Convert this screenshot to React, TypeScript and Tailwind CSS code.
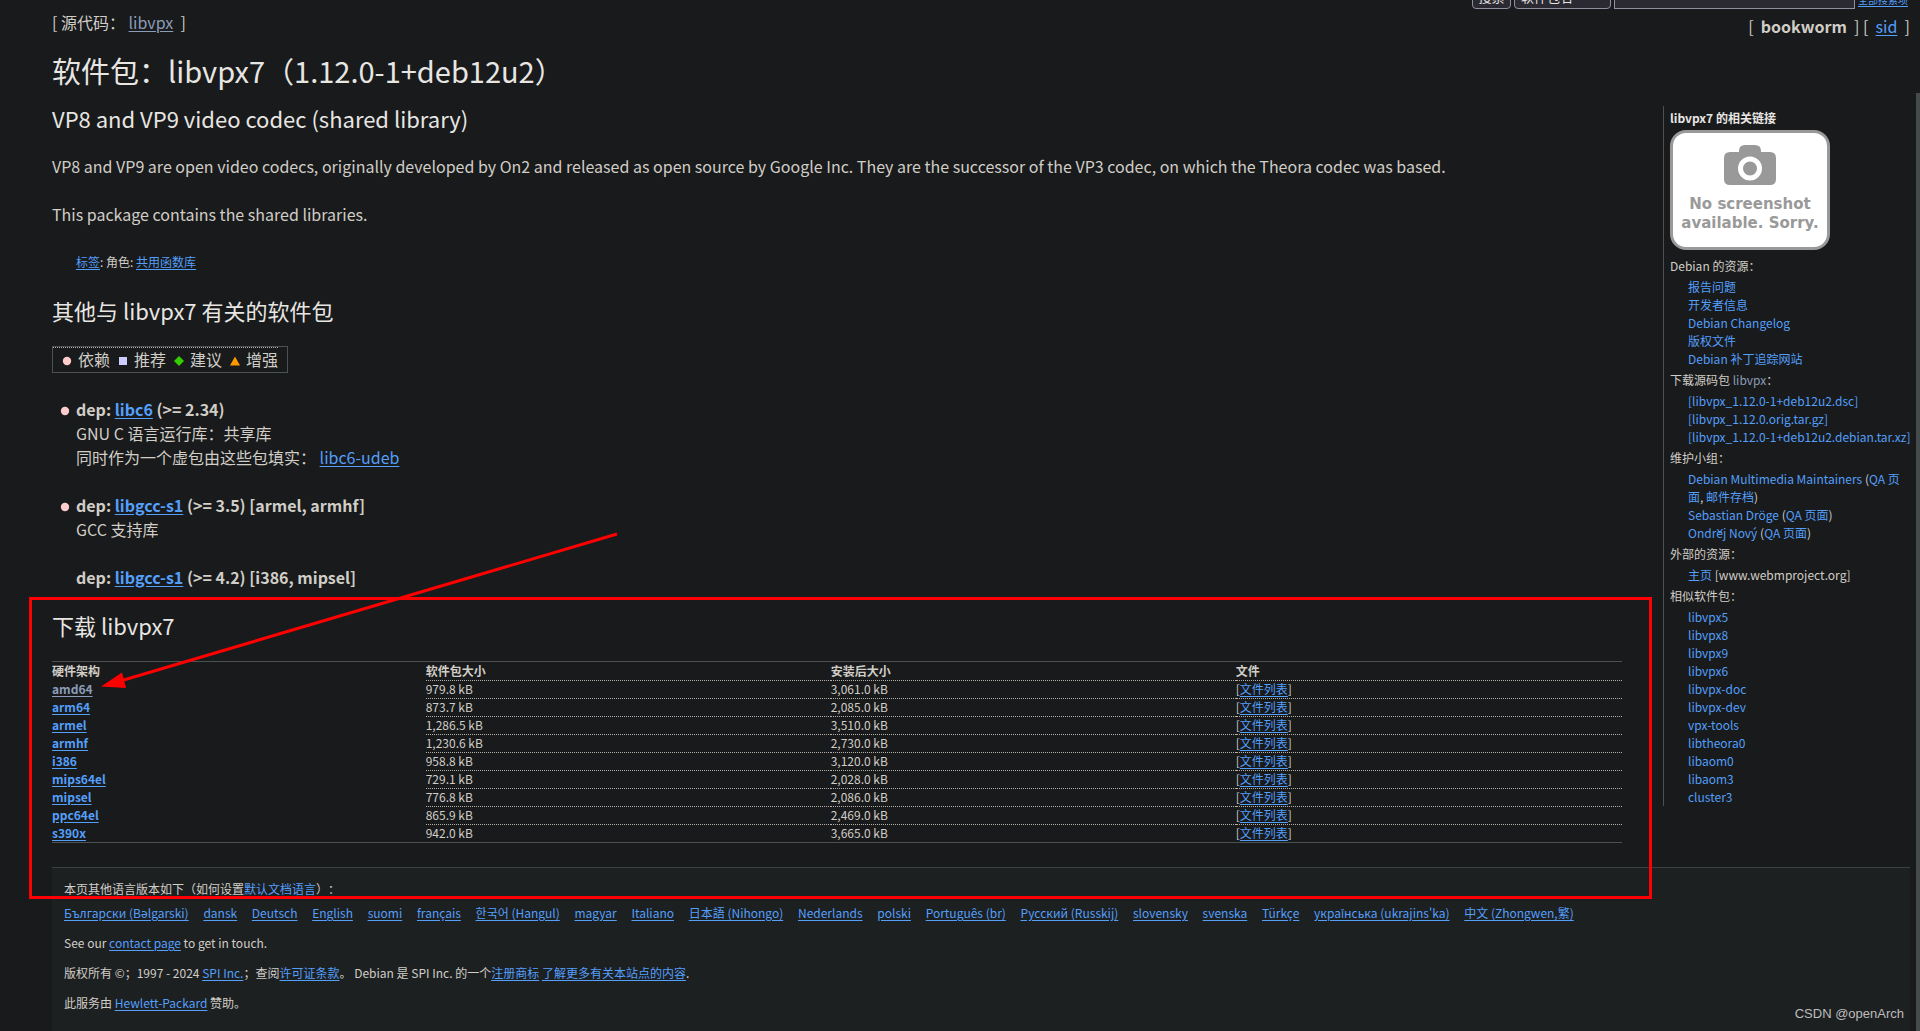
import type { ReactNode } from "react";

const downloads = [
  { arch: "amd64", size: "979.8 kB", installed: "3,061.0 kB", visited: true },
  { arch: "arm64", size: "873.7 kB", installed: "2,085.0 kB" },
  { arch: "armel", size: "1,286.5 kB", installed: "3,510.0 kB" },
  { arch: "armhf", size: "1,230.6 kB", installed: "2,730.0 kB" },
  { arch: "i386", size: "958.8 kB", installed: "3,120.0 kB" },
  { arch: "mips64el", size: "729.1 kB", installed: "2,028.0 kB" },
  { arch: "mipsel", size: "776.8 kB", installed: "2,086.0 kB" },
  { arch: "ppc64el", size: "865.9 kB", installed: "2,469.0 kB" },
  { arch: "s390x", size: "942.0 kB", installed: "3,665.0 kB" },
];

const languages = [
  "Български (Bəlgarski)",
  "dansk",
  "Deutsch",
  "English",
  "suomi",
  "français",
  "한국어 (Hangul)",
  "magyar",
  "Italiano",
  "日本語 (Nihongo)",
  "Nederlands",
  "polski",
  "Português (br)",
  "Русский (Russkij)",
  "slovensky",
  "svenska",
  "Türkçe",
  "українська (ukrajins'ka)",
  "中文 (Zhongwen,繁)",
];

const similar = [
  "libvpx5",
  "libvpx8",
  "libvpx9",
  "libvpx6",
  "libvpx-doc",
  "libvpx-dev",
  "vpx-tools",
  "libtheora0",
  "libaom0",
  "libaom3",
  "cluster3",
];

const A = ({ children, visited }: { children: ReactNode; visited?: boolean }) => (
  <a
    href="#"
    className={
      visited
        ? "text-[#8b9cb8] underline underline-offset-2"
        : "text-[#549ffa] underline underline-offset-2"
    }
  >
    {children}
  </a>
);

// Sidebar links carry no underline
const SideA = ({ children }: { children: ReactNode }) => (
  <a href="#" className="text-[#549ffa]">
    {children}
  </a>
);

const Dot = () => (
  <svg viewBox="0 0 10 10" className="w-[10px] h-[10px] mt-1" aria-hidden="true">
    <circle cx="5" cy="5" r="4.2" fill="#ffcccc" />
  </svg>
);

const Legend = () => (
  <div className="w-fit mt-6 border border-[#4c5154] pr-[9px]">
    <ul className="flex gap-2 pl-[9px] pb-[2px] leading-[22px] border-t border-dotted border-[#b5b0a8]">
      <li className="flex items-center gap-[6px]">
        <Dot />
        依赖
      </li>
      <li className="flex items-center gap-[6px]">
        <svg viewBox="0 0 10 10" className="w-[10px] h-[10px] mt-1" aria-hidden="true">
          <rect x="1" y="1" width="8" height="8" fill="#ccccff" />
        </svg>
        推荐
      </li>
      <li className="flex items-center gap-[6px]">
        <svg viewBox="0 0 10 10" className="w-[10px] h-[10px] mt-1" aria-hidden="true">
          <path d="M5 0 L10 5 L5 10 L0 5 Z" fill="#33cc00" />
        </svg>
        建议
      </li>
      <li className="flex items-center gap-[6px]">
        <svg viewBox="0 0 10 10" className="w-[10px] h-[10px] mt-1" aria-hidden="true">
          <path d="M5 0.5 L10 9.5 L0 9.5 Z" fill="#ff9900" />
        </svg>
        增强
      </li>
    </ul>
  </div>
);

const Dep = ({
  name,
  version,
  bullet,
  children,
}: {
  name: string;
  version: string;
  bullet?: boolean;
  children?: ReactNode;
}) => (
  <li className="flex">
    <div className="w-6 h-6 pl-[2px] flex items-center justify-center shrink-0">{bullet && <Dot />}</div>
    <div>
      <p className="font-bold">
        dep: <A>{name}</A> {version}
      </p>
      {children}
    </div>
  </li>
);

const DownloadTable = () => (
  <table className="w-full mt-6 table-fixed border-separate border-spacing-0 border-y border-[#4c5154] text-xs text-left">
    <thead>
      <tr className="leading-[18px]">
        <th className="p-0 w-[23.8%]">硬件架构</th>
        <th className="p-0 w-[25.8%]">软件包大小</th>
        <th className="p-0 w-[25.8%]">安装后大小</th>
        <th className="p-0">文件</th>
      </tr>
    </thead>
    <tbody>
      {downloads.map((d) => (
        <tr key={d.arch} className="leading-4">
          <th className="p-0 pb-px border-t border-transparent">
            <A visited={d.visited}>{d.arch}</A>
          </th>
          <td className="p-0 pb-px border-t border-dotted border-[#b5b0a8]">{d.size}</td>
          <td className="p-0 pb-px border-t border-dotted border-[#b5b0a8]">{d.installed}</td>
          <td className="p-0 pb-px border-t border-dotted border-[#b5b0a8]">
            [<A>文件列表</A>]
          </td>
        </tr>
      ))}
    </tbody>
  </table>
);

const SideSection = ({ title, children }: { title: ReactNode; children: ReactNode }) => (
  <section>
    <h3 className="py-[3px]">{title}</h3>
    <ul className="pl-[18px]">{children}</ul>
  </section>
);

const NoScreenshot = () => (
  <a
    href="#"
    className="flex flex-col items-center w-40 h-[120px] mt-[3px] mb-[4px] pt-3 rounded-2xl border-[3px] border-[#999999] bg-white text-[#999999]"
  >
    <svg viewBox="0 0 52 40" className="w-[52px] h-10" aria-hidden="true">
      <path
        d="M6 7 H15 V6 Q15 0 21 0 H31 Q37 0 37 6 V7 H46 Q52 7 52 13 V34 Q52 40 46 40 H6 Q0 40 0 34 V13 Q0 7 6 7 Z"
        fill="#999999"
      />
      <circle cx="26" cy="23.5" r="9.5" fill="none" stroke="#ffffff" strokeWidth="5" />
    </svg>
    <span className="mt-[10px] font-['DejaVu_Sans'] font-bold text-[15px] leading-[19px] text-center whitespace-nowrap">
      No screenshot
      <br />
      available. Sorry.
    </span>
  </a>
);

const Sidebar = () => (
  <aside className="w-[247px] shrink-0 self-start pl-[6px] pt-[3px] border-l border-[#4c5154] text-xs leading-[18px]">
    <h2 className="font-bold text-[#e8e6e3]">libvpx7 的相关链接</h2>
    <NoScreenshot />
    <SideSection title="Debian 的资源：">
      <li><SideA>报告问题</SideA></li>
      <li><SideA>开发者信息</SideA></li>
      <li><SideA>Debian Changelog</SideA></li>
      <li><SideA>版权文件</SideA></li>
      <li><SideA>Debian 补丁追踪网站</SideA></li>
    </SideSection>
    <SideSection
      title={
        <>
          下载源码包 <a href="#" className="text-[#8b9cb8]">libvpx</a>：
        </>
      }
    >
      <li><SideA>[libvpx_1.12.0-1+deb12u2.dsc]</SideA></li>
      <li><SideA>[libvpx_1.12.0.orig.tar.gz]</SideA></li>
      <li className="whitespace-nowrap"><SideA>[libvpx_1.12.0-1+deb12u2.debian.tar.xz]</SideA></li>
    </SideSection>
    <SideSection title="维护小组：">
      <li>
        <SideA>Debian Multimedia Maintainers</SideA> (<SideA>QA 页面</SideA>, <SideA>邮件存档</SideA>)
      </li>
      <li><SideA>Sebastian Dröge</SideA> (<SideA>QA 页面</SideA>)</li>
      <li><SideA>Ondřej Nový</SideA> (<SideA>QA 页面</SideA>)</li>
    </SideSection>
    <SideSection title="外部的资源：">
      <li><SideA>主页</SideA> [www.webmproject.org]</li>
    </SideSection>
    <SideSection title="相似软件包：">
      {similar.map((name) => (
        <li key={name}><SideA>{name}</SideA></li>
      ))}
    </SideSection>
  </aside>
);

const SearchBar = () => (
  <form className="h-[9px] overflow-hidden flex items-end justify-end gap-[3px] pr-3 text-[13px] text-[#e8e6e3]">
    <button type="button" className="w-[39px] h-6 rounded-[4px] border border-[#8f8f9d] bg-[#2b2a33] leading-[22px]">
      搜索
    </button>
    <select aria-label="搜索范围" className="appearance-none w-[97px] h-6 pl-[6px] rounded-[4px] border border-[#8f8f9d] bg-[#2b2a33] leading-[22px]">
      <option>软件包名</option>
    </select>
    <input aria-label="关键字" type="text" className="w-[241px] h-6 border border-[#8f8f9d] bg-[#2b2a33]" />
    <span className="text-[10px] leading-4 pb-px">
      <A>全部搜索项</A>
    </span>
  </form>
);

const Footer = () => (
  <footer className="grow mt-6 ml-[52px] mr-[10px] px-3 pt-3 border-t border-[#3b4043] bg-[#1d2021] text-xs leading-[18px]">
    <p>
      本页其他语言版本如下（如何设置<A>默认文档语言</A>）：
    </p>
    <nav className="mt-[6px]">
      {languages.map((l) => (
        <span key={l} className="mr-3">
          <A>{l}</A>{" "}
        </span>
      ))}
    </nav>
    <p className="mt-3">
      See our <A>contact page</A> to get in touch.
    </p>
    <p className="mt-3">
      版权所有 ©；1997 - 2024 <A>SPI Inc.</A>；查阅<A>许可证条款</A>。 Debian 是 SPI Inc. 的一个<A>注册商标</A>{" "}
      <A>了解更多有关本站点的内容</A>.
    </p>
    <p className="mt-3">
      此服务由 <A>Hewlett-Packard</A> 赞助。
    </p>
  </footer>
);

// Red frame and arrow drawn over the download section
const Markup = () => (
  <>
    <div className="absolute left-[29px] top-[597px] w-[1623px] h-[302px] border-[3px] border-[#ff0000] pointer-events-none" />
    <svg
      viewBox="0 0 520 160"
      className="absolute left-[100px] top-[532px] w-[520px] h-40 pointer-events-none"
      aria-hidden="true"
    >
      <path d="M517 2 L22 148.500" stroke="#ff0000" strokeWidth="3" />
      <path d="M1 154.500 L22 140.500 L26 156 Z" fill="#ff0000" />
    </svg>
    <div className="absolute right-0 top-[93px] bottom-0 w-1 bg-[#454a4d]" />
    <span className="absolute right-4 bottom-[7px] font-['Liberation_Sans'] text-[13px] leading-5 text-[#bdbdbd]">
      CSDN @openArch
    </span>
  </>
);

export default function App() {
  return (
    <div
      lang="zh-CN"
      className="relative flex flex-col min-h-screen overflow-hidden bg-[#181a1b] text-[#d1cdc7] text-base leading-6 [text-spacing-trim:space-all] font-['Noto_Sans_CJK_SC','Noto_Sans',sans-serif]"
    >
      <SearchBar />
      <div className="flex justify-between pl-[52px] pr-[10px]">
        <p className="pt-px whitespace-pre">
          [ 源代码： <A visited>libvpx</A>{"  ]"}
        </p>
        <p className="pt-[5px] whitespace-pre">
          {"[  "}
          <strong>bookworm</strong>
          {"  ] [  "}
          <A>sid</A>
          {"  ]"}
        </p>
      </div>
      <h1 className="mt-3 pl-[52px] text-[29px] leading-[40px] text-[#e8e6e3]">
        软件包：libvpx7（1.12.0-1+deb12u2）
      </h1>
      <div className="flex mt-4 pr-[10px]">
        <main className="grow pl-[52px] pr-[41px]">
          <h2 className="text-[22px] leading-6 text-[#e8e6e3]">VP8 and VP9 video codec (shared library)</h2>
          <p className="mt-6">
            VP8 and VP9 are open video codecs, originally developed by On2 and released as open source by Google Inc.
            They are the successor of the VP3 codec, on which the Theora codec was based.
          </p>
          <p className="mt-6">This package contains the shared libraries.</p>
          <p className="mt-[27px] pl-6 text-xs leading-[18px]">
            <A>标签</A>: 角色: <A>共用函数库</A>
          </p>
          <h2 className="mt-[27px] text-[22px] leading-6 text-[#e8e6e3]">其他与 libvpx7 有关的软件包</h2>
          <Legend />
          <ul className="flex flex-col gap-6 mt-6">
            <Dep name="libc6" version="(>= 2.34)" bullet>
              <p>GNU C 语言运行库：共享库</p>
              <p>
                同时作为一个虚包由这些包填实： <A>libc6-udeb</A>
              </p>
            </Dep>
            <Dep name="libgcc-s1" version="(>= 3.5) [armel, armhf]" bullet>
              <p>GCC 支持库</p>
            </Dep>
            <Dep name="libgcc-s1" version="(>= 4.2) [i386, mipsel]" />
          </ul>
          <h2 className="mt-6 text-[22px] leading-6 text-[#e8e6e3]">下载 libvpx7</h2>
          <DownloadTable />
        </main>
        <Sidebar />
      </div>
      <Footer />
      <Markup />
    </div>
  );
}
